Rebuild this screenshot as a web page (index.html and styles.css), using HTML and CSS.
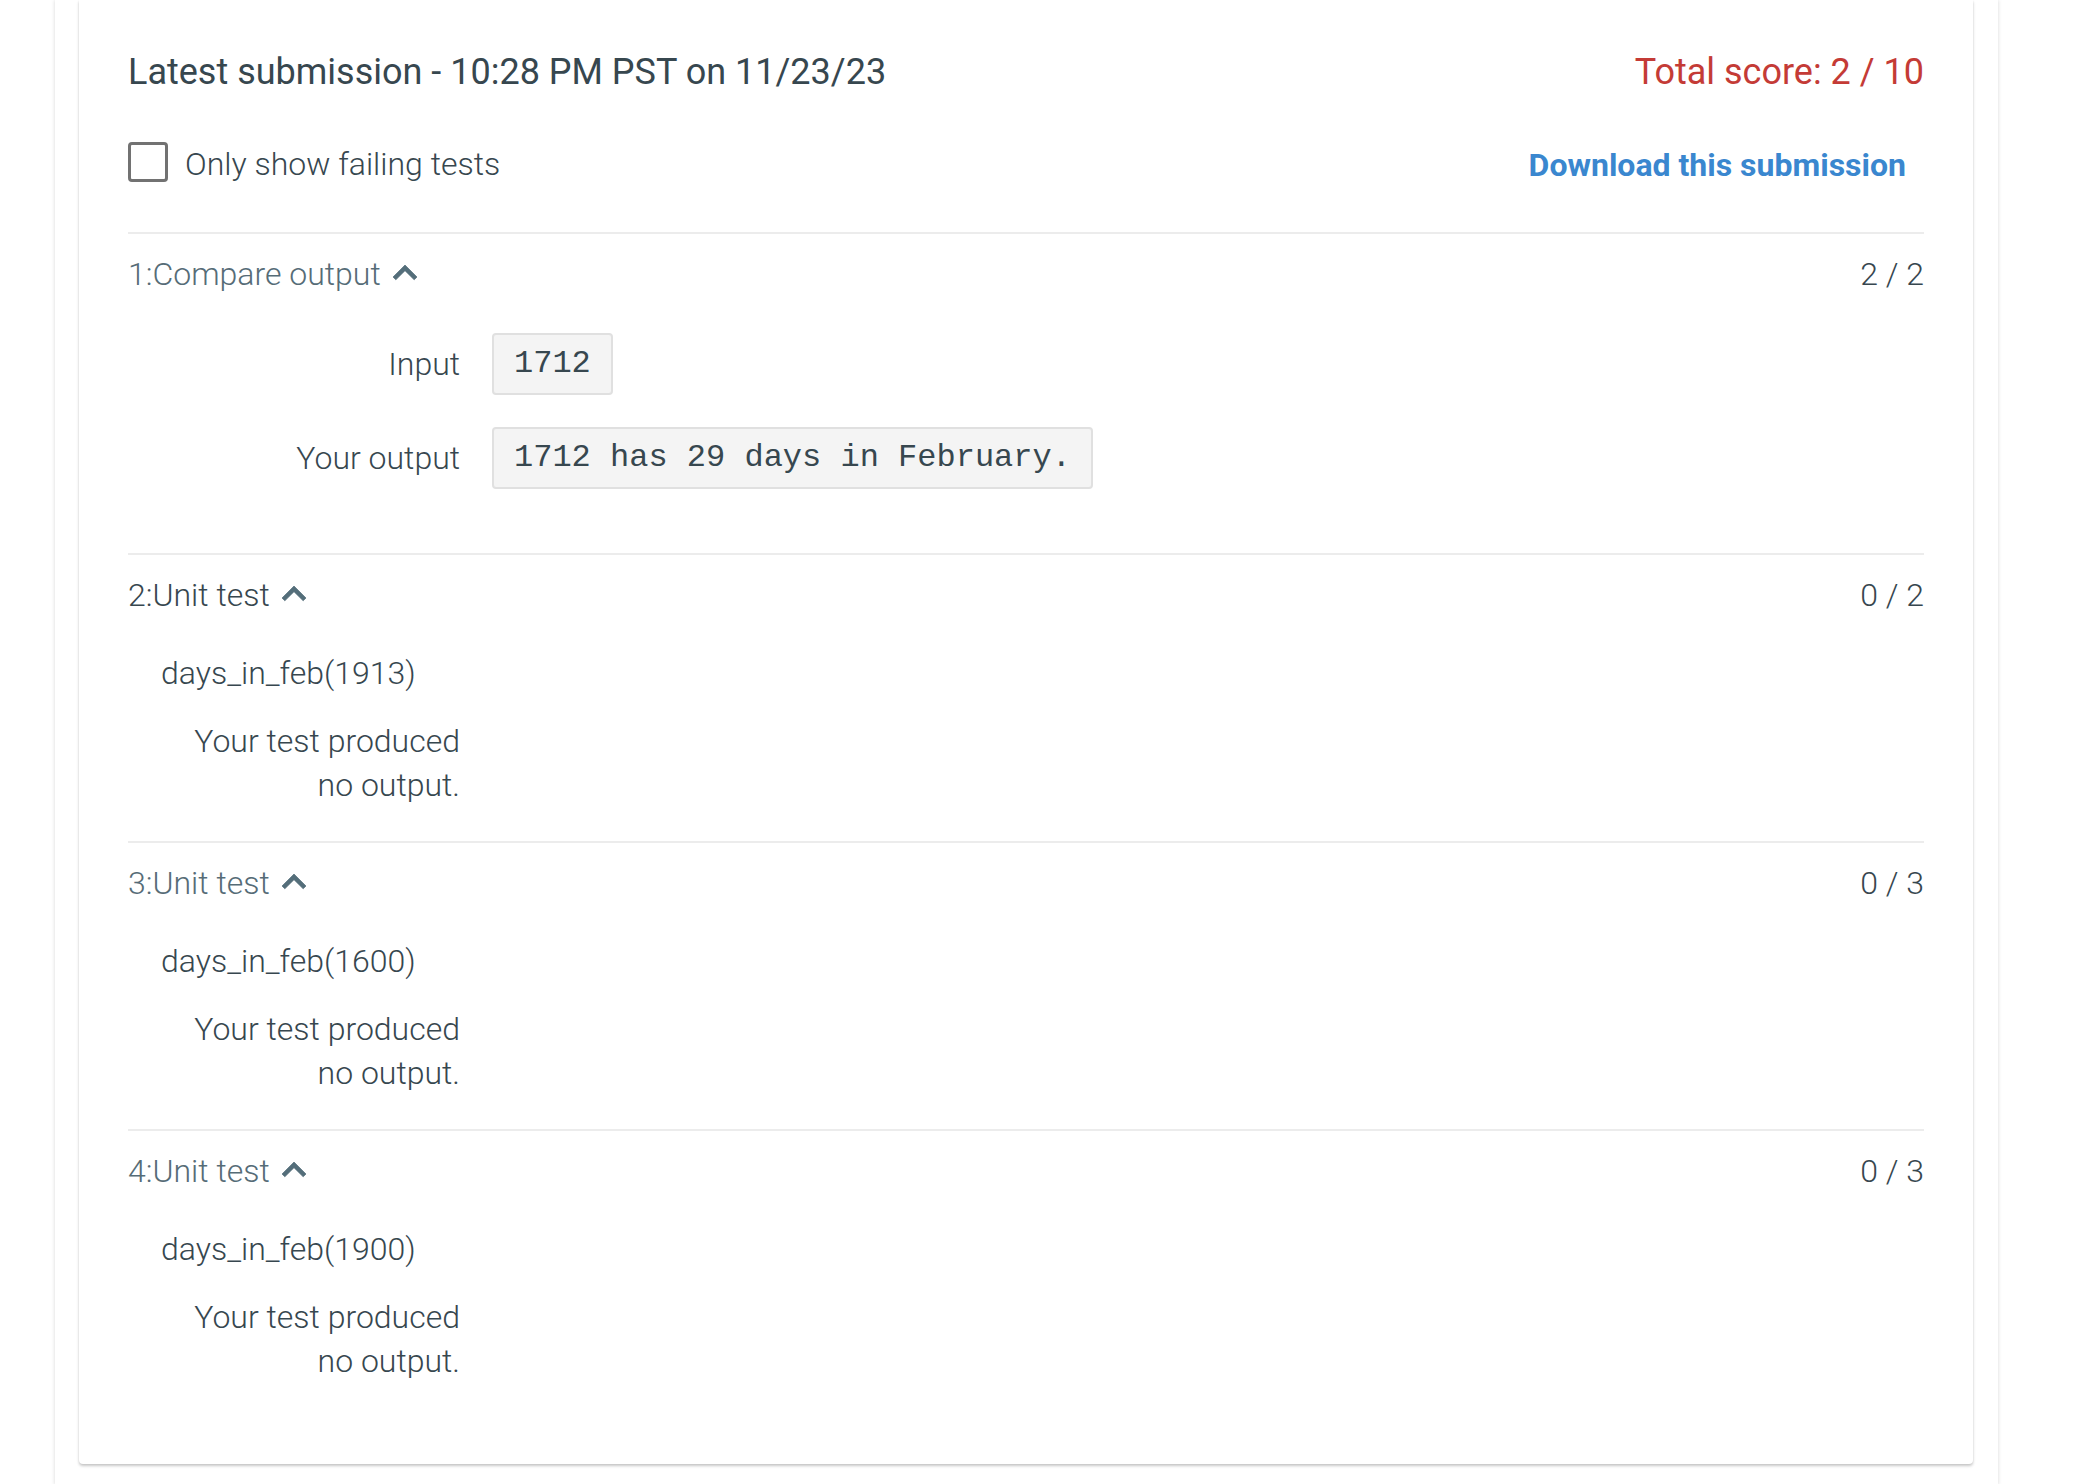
FILE: index.html
```html
<!DOCTYPE html>
<html lang="en">
<head>
<meta charset="utf-8">
<title>Latest submission</title>
<link rel="stylesheet" href="styles.css">
</head>
<body>
<div class="page">
  <div class="card">
    <div class="summary">
      <div class="summary-row">
        <h2 class="title">Latest submission - 10:28 PM PST on 11/23/23</h2>
        <div class="total">Total score: 2 / 10</div>
      </div>
      <div class="summary-row filter-row">
        <label class="filter"><span class="checkbox"></span>Only show failing tests</label>
        <a class="download" href="#">Download this submission</a>
      </div>
    </div>

    <section class="test">
      <div class="test-head">
        <span class="test-name">1:Compare output<svg class="chev" viewBox="0 0 24 24" width="48" height="48"><path d="M12 8l-6 6 1.41 1.41L12 10.83l4.59 4.58L18 14z"/></svg></span>
        <span class="test-score">2 / 2</span>
      </div>
      <div class="test-body compare">
        <div class="io-row"><div class="io-label">Input</div><pre class="io-box">1712</pre></div>
        <div class="io-row"><div class="io-label">Your output</div><pre class="io-box">1712 has 29 days in February.</pre></div>
      </div>
    </section>

    <section class="test">
      <div class="test-head">
        <span class="test-name dark">2:Unit test<svg class="chev" viewBox="0 0 24 24" width="48" height="48"><path d="M12 8l-6 6 1.41 1.41L12 10.83l4.59 4.58L18 14z"/></svg></span>
        <span class="test-score">0 / 2</span>
      </div>
      <div class="test-body unit">
        <div class="call">days_in_feb(1913)</div>
        <div class="message">Your test produced no output.</div>
      </div>
    </section>

    <section class="test">
      <div class="test-head">
        <span class="test-name">3:Unit test<svg class="chev" viewBox="0 0 24 24" width="48" height="48"><path d="M12 8l-6 6 1.41 1.41L12 10.83l4.59 4.58L18 14z"/></svg></span>
        <span class="test-score">0 / 3</span>
      </div>
      <div class="test-body unit">
        <div class="call">days_in_feb(1600)</div>
        <div class="message">Your test produced no output.</div>
      </div>
    </section>

    <section class="test">
      <div class="test-head">
        <span class="test-name">4:Unit test<svg class="chev" viewBox="0 0 24 24" width="48" height="48"><path d="M12 8l-6 6 1.41 1.41L12 10.83l4.59 4.58L18 14z"/></svg></span>
        <span class="test-score">0 / 3</span>
      </div>
      <div class="test-body unit">
        <div class="call">days_in_feb(1900)</div>
        <div class="message">Your test produced no output.</div>
      </div>
    </section>
  </div>
</div>
</body>
</html>
```

FILE: styles.css
```css
html, body {
  margin: 0;
  padding: 0;
  background: #ffffff;
}

body {
  font-family: Roboto, "Liberation Sans", Arial, sans-serif;
  font-size: 32px;
  font-weight: 300;
  line-height: 44px;
  color: #37474f;
}

.page {
  margin-left: 55px;
  width: 1943px;
  min-height: 100vh;
  box-sizing: border-box;
  padding: 0 25px 21px 24px;
  background: #ffffff;
  box-shadow: 0 0 4px rgba(0, 0, 0, 0.16);
}

.card {
  background: #ffffff;
  padding: 50px 49px 47px 49px;
  border-radius: 0 0 4px 4px;
  box-shadow: 0 2px 3px rgba(0, 0, 0, 0.22), 0 0 2px rgba(0, 0, 0, 0.06);
}

.summary {
  padding-bottom: 45px;
}

.summary-row {
  display: flex;
  justify-content: space-between;
  align-items: center;
}

.title {
  margin: 0;
  font-size: 36px;
  line-height: 44px;
  font-weight: 400;
  color: #37474f;
}

.total {
  font-size: 36px;
  line-height: 44px;
  font-weight: 400;
  color: #c43b36;
}

.filter-row {
  margin-top: 46px;
}

.filter {
  display: flex;
  align-items: center;
  color: #37474f;
}

.checkbox {
  width: 34px;
  height: 34px;
  border: 3px solid #727272;
  border-radius: 4px;
  margin-right: 17px;
  margin-top: -3px;
}

.download {
  font-weight: 700;
  color: #3a87cf;
  text-decoration: none;
  margin-right: 18px;
  padding-top: 3px;
}

.test {
  border-top: 2px solid #ececec;
  padding: 18px 0 34px;
}

.test-head {
  display: flex;
  justify-content: space-between;
  align-items: center;
  height: 44px;
}

.test-name {
  display: flex;
  align-items: center;
  color: #566c77;
}

.test-name.dark {
  color: #37474f;
}

.chev {
  fill: #546e7a;
  stroke: #546e7a;
  stroke-width: 0.35;
  stroke-linejoin: miter;
  margin-left: 0;
  margin-top: -2px;
}

.test-score {
  color: #37474f;
}

.test-body {
  padding-left: 33px;
}

.compare {
  padding-top: 37px;
  padding-bottom: 30px;
}

.io-row {
  display: flex;
  align-items: center;
  margin-bottom: 32px;
}

.io-row:last-child {
  margin-bottom: 0;
}

.io-label {
  width: 299px;
  text-align: right;
  margin-right: 32px;
  color: #37474f;
}

.io-box {
  margin: 0;
  padding: 10px 20px;
  line-height: 38px;
  font-family: "Liberation Mono", "Courier New", monospace;
  font-size: 32px;
  font-weight: 400;
  color: #37474f;
  background: #f4f4f4;
  border: 2px solid #e0e0e0;
  border-radius: 4px;
}

.unit {
  padding-top: 34px;
}

.call {
  color: #37474f;
}

.message {
  width: 299px;
  margin-top: 24px;
  text-align: right;
  color: #37474f;
}
```
